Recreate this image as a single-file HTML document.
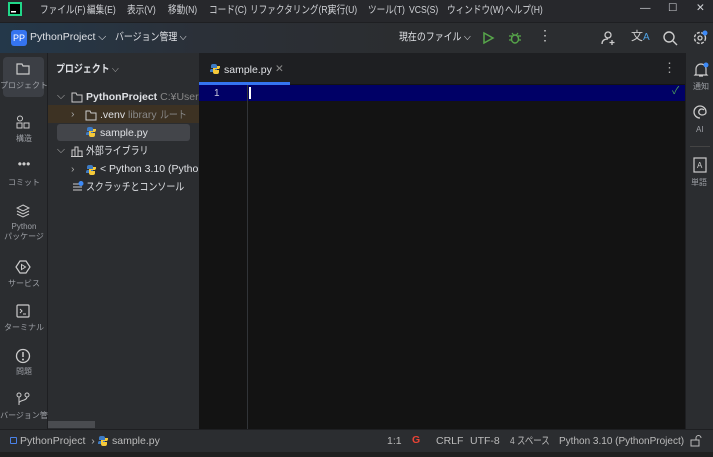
<!DOCTYPE html>
<html><head><meta charset="utf-8"><style>
*{margin:0;padding:0;box-sizing:border-box}
body{width:713px;height:457px;overflow:hidden;background:#1e1f22;font-family:"Liberation Sans","Noto Sans CJK JP",sans-serif;color:#dfe1e5;font-size:11px;position:relative}
.a{position:absolute}
.menu{left:0;top:0;width:713px;height:22px;background:#27282c}
.menu span{position:absolute;top:3px;font-size:10.5px;line-height:14px;color:#d0d2d6;transform:scaleX(.82);transform-origin:left;white-space:nowrap}
.tb{left:0;top:22px;width:713px;height:31px;background:linear-gradient(90deg,#24384a 0,#2b3038 200px,#2b2d30 400px);border-top:1px solid #1e1f22}
.ls{left:0;top:53px;width:48px;height:376px;background:#2b2d30;border-right:1px solid #1e1f22}
.pp{left:48px;top:53px;width:151px;height:376px;background:#2b2d30;overflow:hidden}
.ed{left:199px;top:53px;width:486px;height:376px;background:#131313}
.rs{left:685px;top:53px;width:28px;height:376px;background:#2b2d30;border-left:1px solid #1e1f22}
.sb{left:0;top:429px;width:713px;height:23px;background:#2b2d30;border-top:1px solid #1e1f22}
.lbl{position:absolute;width:48px;text-align:center;font-size:8px;color:#9da0a6;white-space:nowrap}
.t{position:absolute;white-space:nowrap;font-size:10.5px;line-height:13px}
.c{display:inline-block;transform:scaleX(.85);transform-origin:left}
svg{position:absolute}
</style></head><body>
<div class="a menu">
<svg style="left:8px;top:2px" width="14" height="14"><rect width="14" height="14" fill="#21d789"/><rect x="2" y="2" width="10" height="10" fill="#000"/><rect x="3" y="9" width="5" height="1.5" fill="#fff"/></svg>
<span style="left:40px">ファイル(F)</span><span style="left:87px">編集(E)</span><span style="left:127px">表示(V)</span><span style="left:168px">移動(N)</span><span style="left:209px">コード(C)</span><span style="left:250px">リファクタリング(R)</span><span style="left:328px">実行(U)</span><span style="left:368px">ツール(T)</span><span style="left:409px">VCS(S)</span><span style="left:447px">ウィンドウ(W)</span><span style="left:505px">ヘルプ(H)</span>
<span style="left:640px;top:1px;transform:none">—</span><span style="left:668px;top:1px;transform:none">☐</span><span style="left:696px;top:1px;transform:none">✕</span>
</div>
<div class="a tb">
<div class="a" style="left:11px;top:7px;width:16px;height:16px;border-radius:3px;background:#3574f0;font-size:9px;color:#fff;text-align:center;line-height:16px">PP</div>
<div class="t" style="left:30px;top:8px">PythonProject ⌵</div>
<div class="t" style="left:115px;top:8px"><span class="c">バージョン管理 ⌵</span></div>
<div class="t" style="left:399px;top:8px"><span class="c">現在のファイル ⌵</span></div>
<svg style="left:481px;top:8px" width="14" height="14"><path d="M3 2 L12 7 L3 12Z" fill="none" stroke="#57a64a" stroke-width="1.5"/></svg>
<svg style="left:508px;top:8px" width="14" height="14"><ellipse cx="7" cy="8" rx="3.5" ry="4" fill="none" stroke="#57a64a" stroke-width="1.4"/><path d="M1 5h3M10 5h3M1 9h2.5M10.5 9h2.5M4 2l1.5 2M10 2l-1.5 2" stroke="#57a64a" stroke-width="1.2"/></svg>
<div class="t" style="left:538px;top:6px;font-size:14px;color:#ccc">⋮</div>
<svg style="left:601px;top:7px" width="16" height="16"><circle cx="7" cy="5" r="3" fill="none" stroke="#ccc" stroke-width="1.3"/><path d="M1 14c0-4 3-5 6-5M11 10v5M8.5 12.5h5" fill="none" stroke="#ccc" stroke-width="1.3"/></svg>
<div class="t" style="left:631px;top:7px;font-size:12px;color:#ccc">文<span style="color:#4ea3e6;font-size:10px">A</span></div>
<svg style="left:662px;top:7px" width="16" height="16"><circle cx="7" cy="7" r="5" fill="none" stroke="#ccc" stroke-width="1.4"/><path d="M11 11l4 4" stroke="#ccc" stroke-width="1.4"/></svg>
<svg style="left:692px;top:7px" width="16" height="16"><circle cx="8" cy="8" r="5.5" fill="none" stroke="#ccc" stroke-width="1.4" stroke-dasharray="3 1.5"/><circle cx="8" cy="8" r="2" fill="none" stroke="#ccc" stroke-width="1.3"/><circle cx="13" cy="3" r="2.5" fill="#3d8af7"/></svg>
</div>
<div class="a ls">
<div class="a" style="left:3px;top:4px;width:41px;height:40px;background:#3c3f45;border-radius:4px"></div>
<svg style="left:16px;top:10px" width="14" height="12"><path d="M1 1h5l1 2h6v8H1Z" fill="none" stroke="#ccc" stroke-width="1.2"/></svg>
<div class="lbl" style="top:27px">プロジェクト</div>
<svg style="left:16px;top:62px" width="14" height="14"><circle cx="4" cy="3.5" r="2.5" fill="none" stroke="#ccc"/><rect x="1" y="8" width="5" height="5" fill="none" stroke="#ccc"/><rect x="8" y="8" width="5" height="5" fill="none" stroke="#ccc"/></svg>
<div class="lbl" style="top:80px">構造</div>
<div class="lbl" style="top:104px;font-size:12px;color:#ccc">•••</div>
<div class="lbl" style="top:124px">コミット</div>
<svg style="left:16px;top:151px" width="14" height="14"><path d="M7 1l6 3-6 3-6-3ZM1 7l6 3 6-3M1 10l6 3 6-3" fill="none" stroke="#ccc"/></svg>
<div class="lbl" style="top:169px">Python<br>パッケージ</div>
<svg style="left:15px;top:206px" width="16" height="16"><path d="M5 2h6l4 6-4 6H5L1 8Z" fill="none" stroke="#ccc" stroke-width="1.2"/><path d="M6.5 5.5L10.5 8 6.5 10.5Z" fill="none" stroke="#ccc"/></svg>
<div class="lbl" style="top:225px">サービス</div>
<svg style="left:16px;top:251px" width="14" height="14"><rect x="1" y="1" width="12" height="12" rx="1" fill="none" stroke="#ccc" stroke-width="1.2"/><path d="M4 5l2 2-2 2M7 10h3" fill="none" stroke="#ccc"/></svg>
<div class="lbl" style="top:269px">ターミナル</div>
<svg style="left:15px;top:295px" width="16" height="16"><circle cx="8" cy="8" r="6.5" fill="none" stroke="#ccc" stroke-width="1.3"/><path d="M8 4v5" stroke="#ccc" stroke-width="1.5"/><circle cx="8" cy="11.5" r="1" fill="#ccc"/></svg>
<div class="lbl" style="top:313px">問題</div>
<svg style="left:16px;top:339px" width="14" height="14"><circle cx="3" cy="3" r="2" fill="none" stroke="#ccc"/><circle cx="11" cy="3" r="2" fill="none" stroke="#ccc"/><path d="M3 5v8M11 5c0 4-8 3-8 6" fill="none" stroke="#ccc"/></svg>
<div class="lbl" style="top:357px">バージョン管</div>
</div>
<div class="a pp">
<div class="t" style="left:8px;top:10px;font-weight:bold"><span class="c">プロジェクト <span style="font-weight:normal;color:#aaa">⌵</span></span></div>
<div class="t" style="left:9px;top:37px;color:#aaa">⌵</div>
<svg style="left:23px;top:39px" width="12" height="11"><path d="M1 1h4l1 2h5v7H1Z" fill="none" stroke="#ccc"/></svg>
<div class="t" style="left:38px;top:38px;font-weight:bold">PythonProject <span style="font-weight:normal;color:#888">C:¥Users¥g</span></div>
<div class="a" style="left:0;top:52px;width:151px;height:18px;background:#3d3223"></div>
<div class="t" style="left:23px;top:55px;color:#aaa">›</div>
<svg style="left:37px;top:57px" width="12" height="11"><path d="M1 1h4l1 2h5v7H1Z" fill="none" stroke="#ccc"/></svg>
<div class="t" style="left:52px;top:56px">.venv <span style="color:#888">library <span class="c">ルート</span></span></div>
<div class="a" style="left:9px;top:71px;width:133px;height:17px;background:#43454a;border-radius:3px"></div>
<svg style="left:37px;top:73px" width="12" height="12"><path d="M6 1h-2a2 2 0 0 0-2 2v2h4v1H2a2 2 0 0 0-1 2v1h3V7h4V3a2 2 0 0 0-2-2Z" fill="#3d7bc4"/><path d="M6 11h2a2 2 0 0 0 2-2V7H6V6h4a2 2 0 0 0 1-2V3H8v2H4v4a2 2 0 0 0 2 2Z" fill="#f5c93a"/></svg>
<div class="t" style="left:52px;top:74px">sample.py</div>
<div class="t" style="left:9px;top:91px;color:#aaa">⌵</div>
<svg style="left:23px;top:93px" width="12" height="11"><path d="M1 10V4h3v6M4 10V1h3v9M7 10V5h4v5M0 10.5h12" fill="none" stroke="#ccc"/></svg>
<div class="t" style="left:38px;top:92px"><span class="c">外部ライブラリ</span></div>
<div class="t" style="left:23px;top:110px;color:#aaa">›</div>
<svg style="left:37px;top:111px" width="12" height="12"><path d="M6 1h-2a2 2 0 0 0-2 2v2h4v1H2a2 2 0 0 0-1 2v1h3V7h4V3a2 2 0 0 0-2-2Z" fill="#3d7bc4"/><path d="M6 11h2a2 2 0 0 0 2-2V7H6V6h4a2 2 0 0 0 1-2V3H8v2H4v4a2 2 0 0 0 2 2Z" fill="#f5c93a"/></svg>
<div class="t" style="left:52px;top:110px">&lt; Python 3.10 (PythonP</div>
<svg style="left:24px;top:128px" width="12" height="11"><path d="M1 3h6M1 6h9M1 9h9" stroke="#ccc"/><circle cx="9" cy="2.5" r="2.5" fill="#3d8af7"/></svg>
<div class="t" style="left:38px;top:128px"><span class="c">スクラッチとコンソール</span></div>
<div class="a" style="left:0;top:368px;width:47px;height:7px;background:#4a4c50"></div>
</div>
<div class="a ed">
<div class="a" style="left:0;top:0;width:486px;height:31px;background:#1e1f22"></div>
<svg style="left:10px;top:10px" width="12" height="12"><path d="M6 1h-2a2 2 0 0 0-2 2v2h4v1H2a2 2 0 0 0-1 2v1h3V7h4V3a2 2 0 0 0-2-2Z" fill="#3d7bc4"/><path d="M6 11h2a2 2 0 0 0 2-2V7H6V6h4a2 2 0 0 0 1-2V3H8v2H4v4a2 2 0 0 0 2 2Z" fill="#f5c93a"/></svg>
<div class="t" style="left:25px;top:11px">sample.py</div>
<div class="t" style="left:76px;top:10px;color:#888">✕</div>
<div class="a" style="left:0;top:29px;width:91px;height:3px;background:#3574f0"></div>
<div class="t" style="left:464px;top:8px;color:#aaa;font-size:13px">⋮</div>
<div class="a" style="left:0;top:32px;width:486px;height:16px;background:#000066"></div>
<div class="t" style="left:15px;top:34px;font-size:10px;color:#ccd">1</div>
<div class="a" style="left:48px;top:32px;width:1px;height:344px;background:#313438"></div>
<div class="a" style="left:50px;top:34px;width:1.5px;height:12px;background:#fff"></div>
<div class="t" style="left:473px;top:32px;color:#4c9e5a">✓</div>
</div>
<div class="a rs">
<svg style="left:7px;top:9px" width="16" height="16"><path d="M3 12V7a5 5 0 0 1 10 0v5l1 1H2Z M6 14h4" fill="none" stroke="#ccc" stroke-width="1.2"/><circle cx="13" cy="3" r="2.5" fill="#3d8af7"/></svg>
<div class="t" style="left:7px;top:27px;font-size:8px;color:#9da0a6">通知</div>
<svg style="left:7px;top:52px" width="14" height="14"><path d="M7 13a6 6 0 1 1 6-6c0 2-2 3-4 3a3 3 0 1 1 2-5" fill="none" stroke="#ccc" stroke-width="1.3"/></svg>
<div class="t" style="left:10px;top:70px;font-size:8px;color:#9da0a6">AI</div>
<div class="a" style="left:4px;top:93px;width:20px;height:1px;background:#444"></div>
<svg style="left:7px;top:104px" width="14" height="16"><rect x="1" y="1" width="12" height="14" fill="none" stroke="#ccc" stroke-width="1.2"/><text x="4" y="11" font-size="8" fill="#ccc" font-family="Liberation Sans">A</text></svg>
<div class="t" style="left:5px;top:123px;font-size:8px;color:#9da0a6">単語</div>
</div>
<div class="a sb">
<div class="a" style="left:10px;top:7px;width:7px;height:7px;border:1.3px solid #4a82e8;border-radius:1px"></div>
<div class="t" style="left:20px;top:5px;color:#bbb">PythonProject &nbsp;›</div>
<svg style="left:97px;top:5px" width="12" height="12"><path d="M6 1h-2a2 2 0 0 0-2 2v2h4v1H2a2 2 0 0 0-1 2v1h3V7h4V3a2 2 0 0 0-2-2Z" fill="#3d7bc4"/><path d="M6 11h2a2 2 0 0 0 2-2V7H6V6h4a2 2 0 0 0 1-2V3H8v2H4v4a2 2 0 0 0 2 2Z" fill="#f5c93a"/></svg>
<div class="t" style="left:112px;top:5px;color:#bbb">sample.py</div>
<div class="t" style="left:387px;top:5px;color:#bbb">1:1</div>
<div class="t" style="left:412px;top:4px;font-weight:bold;color:#ea4335">G</div>
<div class="t" style="left:436px;top:5px;color:#bbb">CRLF</div>
<div class="t" style="left:470px;top:5px;color:#bbb">UTF-8</div>
<div class="t" style="left:510px;top:5px;color:#bbb"><span class="c" style="transform:scaleX(.8)">4 スペース</span></div>
<div class="t" style="left:559px;top:5px;color:#bbb;font-size:10px">Python 3.10 (PythonProject)</div>
<svg style="left:690px;top:5px" width="12" height="12"><rect x="1" y="5" width="8" height="6" fill="none" stroke="#bbb"/><path d="M6 5V3a2.5 2.5 0 0 1 5 0" fill="none" stroke="#bbb"/></svg>
</div>
<div class="a" style="left:0;top:452px;width:713px;height:5px;background:#202020"></div>
</body></html>
